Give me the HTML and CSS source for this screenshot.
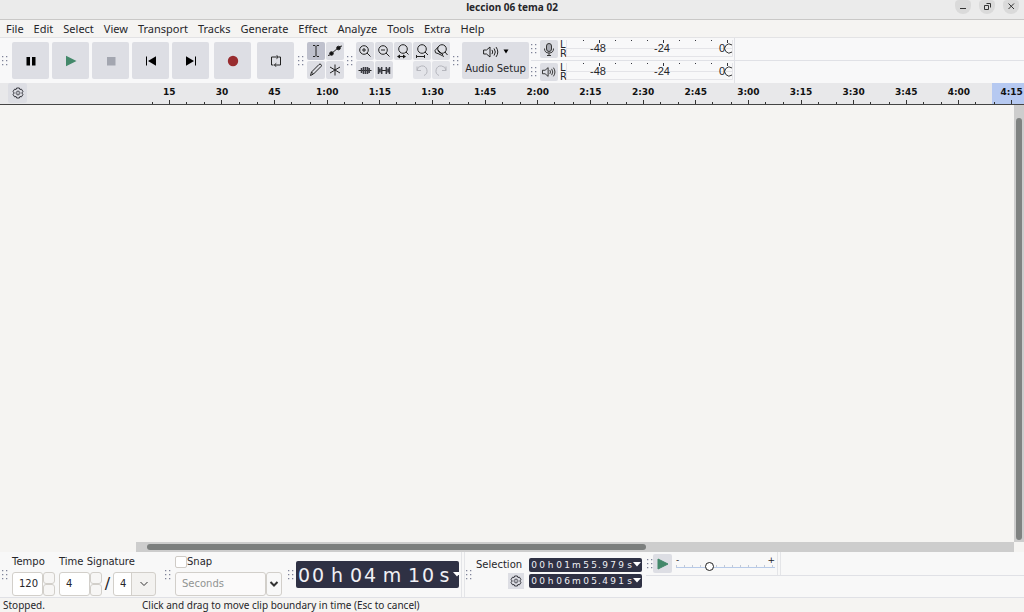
FILE: index.html
```html
<!DOCTYPE html>
<html lang="en">
<head>
<meta charset="utf-8">
<title>leccion 06 tema 02</title>
<link rel="stylesheet" href="styles.css">
</head>
<body>
<svg class="defs" aria-hidden="true">
  <symbol id="grip" viewBox="0 0 6 10"><path fill="#7f8399" d="M0 0h1.300v1.300H0zM4 0h1.300v1.300H4zM0 4h1.300v1.300H0zM4 4h1.300v1.300H4zM0 8h1.300v1.300H0zM4 8h1.300v1.300H4z"/></symbol>
  <symbol id="gear" viewBox="0 0 12 12"><path fill="none" stroke="#33343c" d="M4.600 1h2.800l.5 1.500 1.600-.3 1.400 2.300L9.800 6l1.100 1.500-1.400 2.300-1.600-.3-.5 1.500H4.600l-.5-1.500-1.600.3-1.400-2.300L2.200 6 1.100 4.500l1.400-2.300 1.600.3z"/><path fill="none" stroke="#33343c" stroke-width=".8" d="M5 4.200h2L8.100 6 7 7.800H5L3.900 6z"/><circle cx="6" cy="6" r=".6" fill="#33343c"/></symbol>
  <symbol id="speaker" viewBox="0 0 16 12"><path fill="none" stroke="#222" stroke-linejoin="round" stroke-linecap="round" d="M1 4h2.500L7 1v10L3.500 8H1zM9.200 4.200q1.300 1.800 0 3.600M11.300 2.800q2.300 3.200 0 6.400M13.300 1.400q3.200 4.600 0 9.200"/></symbol>
  <symbol id="meter" viewBox="0 0 168 18">
    <path fill="none" stroke="#e4e4e8" d="M.5 1v16.500h166V1M.5 9.500h166"/>
    <path stroke="#33343c" d="M17.500 1v1M33.500 1v3M49.500 1v1M65.500 1v1M81.500 1v1M97.500 1v3M113.500 1v1M129.500 1v1M145.500 1v1M161.500 1v3"/>
    <path fill="none" stroke="#333" d="M166 6a4.500 4.500 0 1 0 0 7"/>
  </symbol>
</svg>

<header class="titlebar">
  <h1>leccion 06 tema 02</h1>
  <div class="window-buttons">
    <button aria-label="Minimize"><svg viewBox="0 0 16 16"><path d="M5 9.500h6"/></svg></button>
    <button aria-label="Restore"><svg viewBox="0 0 16 16"><path d="M5.500 6.500h4v4h-4zM7.500 4.500h4v4"/></svg></button>
    <button aria-label="Close"><svg viewBox="0 0 16 16"><path d="M5.500 4.500l5.500 5.500M11 4.500l-5.500 5.500"/></svg></button>
  </div>
</header>

<nav class="menubar" aria-label="Main menu">
  <button>File</button><button>Edit</button><button>Select</button><button>View</button><button>Transport</button><button>Tracks</button><button>Generate</button><button>Effect</button><button>Analyze</button><button>Tools</button><button>Extra</button><button>Help</button>
</nav>

<section class="toolbar" aria-label="Toolbars">
  <div class="group">
    <svg class="grip"><use href="#grip"/></svg>
    <div class="transport">
      <button aria-label="Pause"><svg viewBox="0 0 12 12"><path d="M1.500 2h3.500v8.500H1.500zM7 2h3.500v8.500H7z"/></svg></button>
      <button aria-label="Play"><svg viewBox="0 0 12 12"><path fill="#43886a" d="M1 .8 11.500 6 1 11.200z"/></svg></button>
      <button aria-label="Stop"><svg viewBox="0 0 12 12"><path fill="#a3a6b0" d="M2 2h8.500v8.500H2z"/></svg></button>
      <button aria-label="Skip to start"><svg viewBox="0 0 12 12"><path d="M1 1.500h1v9H1zM11 1.200v9.600L3 6z"/></svg></button>
      <button aria-label="Skip to end"><svg viewBox="0 0 12 12"><path d="M10 1.500h1v9h-1zM1 1.200v9.600L9 6z"/></svg></button>
    </div>
    <button class="big" aria-label="Record"><svg viewBox="0 0 12 12"><circle cx="6" cy="6" r="5.200" fill="#982c2f"/></svg></button>
    <button class="big" aria-label="Loop"><svg viewBox="0 0 12 12"><path fill="none" stroke="#222" d="M3.500 10H1.500V2H8M6.500 .3 8.500 2 6.500 3.700M9 2h1.500v8H4.500M6.300 8.300 4.300 10l2 1.700"/></svg></button>
  </div>
  <div class="group">
    <svg class="grip"><use href="#grip"/></svg>
    <div class="tools two">
      <button class="active" aria-label="Selection tool"><svg viewBox="0 0 18 18"><path d="M6 3.500h2l1 1 1-1h2M9 4.500v9M6 14.500h2l1-1 1 1h2"/></svg></button>
      <button aria-label="Envelope tool"><svg viewBox="0 0 18 18"><path d="M2 13.500q2 0 3.500-2L12 6q2-2 4-2"/><circle cx="5.500" cy="11.500" r="1.800" class="solid"/><circle cx="12.500" cy="6" r="1.800" class="solid"/></svg></button>
      <button aria-label="Draw tool"><svg viewBox="0 0 18 18"><path d="M3.500 14.500l1-3.500 7.500-7.500q1-1 2 0t0 2L6.500 13zM4.500 11l2 2"/></svg></button>
      <button aria-label="Multi-tool"><svg viewBox="0 0 18 18"><path d="M9 3.500v11M4 6l10 6M14 6 4 12"/></svg></button>
    </div>
  </div>
  <div class="group">
    <svg class="grip"><use href="#grip"/></svg>
    <div class="tools five">
      <button aria-label="Zoom in"><svg viewBox="0 0 18 18"><circle cx="8" cy="8" r="4.300"/><path d="M11 11l3.500 3.500M6 8h4M8 6v4"/></svg></button>
      <button aria-label="Zoom out"><svg viewBox="0 0 18 18"><circle cx="8" cy="8" r="4.300"/><path d="M11 11l3.500 3.500M6 8h4"/></svg></button>
      <button aria-label="Fit selection"><svg viewBox="0 0 18 18"><circle cx="9" cy="7" r="4.300"/><path d="M12 10l2.500 2.500M4 14.500h7"/><path class="solid thin" d="M6 12.500v4l-3-2zM9 12.500v4l3-2z"/></svg></button>
      <button aria-label="Fit project"><svg viewBox="0 0 18 18"><circle cx="9" cy="7" r="4.300"/><path d="M12 10l3 3M3.500 14.500h8M3.500 13v3M11.500 13v3"/></svg></button>
      <button aria-label="Zoom toggle"><svg viewBox="0 0 18 18"><circle cx="10" cy="7" r="4.300"/><path d="M13 10l2.500 3M6.500 4.500 3 8.500q-.5 3 3 3l6 3M6 8l5 5"/></svg></button>
      <button aria-label="Trim audio"><svg viewBox="0 0 18 18"><path d="M2.500 9.500h13"/><path class="wave" d="M5.500 7v5M7.500 6v7M9.500 6v7M11.500 6v7M13.200 7v5"/></svg></button>
      <button aria-label="Silence audio"><svg viewBox="0 0 18 18"><path d="M6 9.500h6"/><path class="wave" d="M3.500 6v7M5 7.500v4M6.700 6v7M11.300 6v7M13 7.500v4M14.500 6v7"/></svg></button>
      <span></span>
      <button disabled aria-label="Undo"><svg viewBox="0 0 18 18"><path d="M4 5.500v4h4M4 9.500A5 5 0 1 1 11 14.500"/></svg></button>
      <button disabled aria-label="Redo"><svg viewBox="0 0 18 18"><path d="M14 5.500v4h-4M14 9.500A5 5 0 1 0 7 14.500"/></svg></button>
    </div>
  </div>
  <div class="group">
    <svg class="grip"><use href="#grip"/></svg>
    <button class="audio-setup"><span><svg class="speaker"><use href="#speaker"/></svg><svg class="caret" viewBox="0 0 6 5"><path d="M.5.500h5L3 4.500z"/></svg></span>Audio Setup</button>
  </div>
  <div class="meters">
    <div class="meter-row">
      <svg class="grip"><use href="#grip"/></svg>
      <button class="meter-button" aria-label="Record meter"><svg viewBox="0 0 16 16"><rect x="5.500" y="2.500" width="5" height="8" rx="2.500" fill="#a9abb3"/><path d="M3.500 7.500q0 4.500 4.500 4.500t4.500-4.500M8 12v2.500M6 14.500h4"/></svg></button>
      <div class="channels"><span>L</span><span>R</span></div>
      <div class="meter"><svg><use href="#meter"/></svg><span>-48</span><span>-24</span><span>0</span></div>
    </div>
    <div class="meter-row">
      <svg class="grip"><use href="#grip"/></svg>
      <button class="meter-button" aria-label="Playback meter"><svg class="small-speaker"><use href="#speaker"/></svg></button>
      <div class="channels"><span>L</span><span>R</span></div>
      <div class="meter"><svg><use href="#meter"/></svg><span>-48</span><span>-24</span><span>0</span></div>
    </div>
  </div>
</section>

<section class="ruler" aria-label="Timeline">
  <button class="options" aria-label="Timeline options"><svg><use href="#gear"/></svg></button>
  <div class="timeline">
    <ol><li>15</li><li>30</li><li>45</li><li>1:00</li><li>1:15</li><li>1:30</li><li>1:45</li><li>2:00</li><li>2:15</li><li>2:30</li><li>2:45</li><li>3:00</li><li>3:15</li><li>3:30</li><li>3:45</li><li>4:00</li><li>4:15</li></ol>
  </div>
</section>

<main class="tracks">
  <div class="canvas"></div>
  <div class="vscroll"><div></div></div>
  <div class="hscroll"><div></div></div>
</main>

<section class="bottom" aria-label="Bottom toolbars">
  <svg class="grip"><use href="#grip"/></svg>
  <div class="field tempo">
    <label for="tempo">Tempo</label>
    <div class="controls"><input id="tempo" value="120"><div class="spin"><button aria-label="Increase tempo"></button><button aria-label="Decrease tempo"></button></div></div>
  </div>
  <div class="field signature">
    <label for="beats">Time Signature</label>
    <div class="controls"><input id="beats" value="4"><div class="spin"><button aria-label="More beats"></button><button aria-label="Fewer beats"></button></div><span class="slash">/</span>
      <div class="select-wrap"><select aria-label="Beat unit"><option>4</option></select><svg viewBox="0 0 10 6"><path d="M1.500 1 5 4.500 8.500 1"/></svg></div></div>
  </div>
  <svg class="grip"><use href="#grip"/></svg>
  <div class="field snap">
    <label><input type="checkbox">Snap</label>
    <div class="controls combo"><input aria-label="Snap to" value="Seconds" disabled><button aria-label="Open snap list"><svg viewBox="0 0 10 6"><path d="M1.500 1 5 4.500 8.500 1"/></svg></button></div>
  </div>
  <svg class="grip"><use href="#grip"/></svg>
  <div class="time big-time"><b>0</b><b>0</b><i>h</i><b>0</b><b>4</b><i class="m">m</i><b>1</b><b>0</b><i class="s">s</i><svg viewBox="0 0 8 5"><path d="M0 0h8L4 4.500z"/></svg></div>
  <div class="edge"></div>
  <svg class="grip"><use href="#grip"/></svg>
  <div class="selection">
    <span>Selection</span>
    <div class="time"><b>0</b><b>0</b><i>h</i><b>0</b><b>1</b><i class="m">m</i><b>5</b><b>5</b><i class="dot">.</i><b>9</b><b>7</b><b>9</b><i>s</i><svg viewBox="0 0 8 5"><path d="M0 0h8L4 4.500z"/></svg></div>
    <button class="options" aria-label="Selection options"><svg><use href="#gear"/></svg></button>
    <div class="time"><b>0</b><b>0</b><i>h</i><b>0</b><b>6</b><i class="m">m</i><b>0</b><b>5</b><i class="dot">.</i><b>4</b><b>9</b><b>1</b><i>s</i><svg viewBox="0 0 8 5"><path d="M0 0h8L4 4.500z"/></svg></div>
  </div>
  <div class="speed-area">
    <div class="speed">
      <svg class="grip"><use href="#grip"/></svg>
      <button class="play" aria-label="Play at speed"><svg viewBox="0 0 12 12"><path fill="#43886a" stroke="#43886a" d="M1 1 11 6 1 11z"/></svg></button>
      <div class="slider"><div><span>-</span><span>+</span></div><input type="range" min="0" max="100" value="32" aria-label="Playback speed"></div>
      <div class="edge"></div>
    </div>
  </div>
</section>

<footer class="status"><span>Stopped.</span><span>Click and drag to move clip boundary in time (Esc to cancel)</span></footer>
</body>
</html>
```
FILE: styles.css
```css
* { box-sizing: border-box; }
body {
  margin: 0;
  height: 100vh;
  display: flex;
  flex-direction: column;
  overflow: hidden;
  background: #f5f4f2;
  color: #26262a;
  font-family: "DejaVu Sans", sans-serif;
  font-size: 10px;
}
button, input, select { font: inherit; color: inherit; margin: 0; padding: 0; border: 0; }
button { background: none; display: flex; align-items: center; justify-content: center; }
svg { display: block; flex: none; }
.defs { width: 0; height: 0; position: absolute; }
.grip { width: 6px; height: 10px; }

.titlebar {
  display: grid;
  grid-template-columns: 1fr auto 1fr;
  height: 20px;
  background: #ebebeb;
  border-bottom: 1px solid #c9c8c7;
}
.titlebar h1 { grid-column: 2; margin: 0; font: bold 10px/14px "Noto Sans", sans-serif; }
.window-buttons { display: flex; justify-content: flex-end; gap: 8px; padding-right: 5px; height: 14px; }
.window-buttons button { width: 16px; height: 14px; border-radius: 4px 4px 8px 8px; background: #dadada; }
.window-buttons svg { width: 16px; height: 16px; fill: none; stroke: #333; }

.menubar {
  display: flex;
  gap: 10px;
  height: 18px;
  padding-left: 6px;
  border-bottom: 1px solid #e3e3e5;
  font: 11px/18px "Noto Sans", sans-serif;
}

.toolbar { display: flex; height: 45px; background: #f8f8f9; }
.group { display: flex; align-items: center; padding-left: 2px; gap: 4px; }
.group + .group { padding-left: 4px; gap: 3px; }
.transport { display: flex; gap: 3px; margin-right: 1px; }
.transport button, .big { width: 37px; height: 37px; border-radius: 2px; background: #dddee4; }
.group .big + .big { margin-left: 2px; }
.transport svg, .big svg { width: 12px; height: 12px; }
.tools { display: grid; gap: 1px; }
.two { grid-template-columns: repeat(2, 18px); }
.five { grid-template-columns: repeat(5, 18px); }
.group:nth-child(3), .group:nth-child(4) { padding-left: 3px; }
.tools button { width: 18px; height: 18px; border-radius: 2px; background: #dddee4; }
.tools .active { background: #bfc1cd; }
.tools svg { width: 18px; height: 18px; fill: none; stroke: #222; }
.tools .solid { fill: #111; }
.tools .thin { stroke: none; }
.tools .wave { stroke: #3a3b42; stroke-width: 1.5; }
.tools :disabled { background: #e3e4e9; }
.tools :disabled svg { stroke: #b5b6bd; }
.audio-setup {
  flex-direction: column;
  gap: 4px;
  width: 67px;
  height: 37px;
  border-radius: 2px;
  background: #dddee4;
  font-size: 10px;
  line-height: 14px;
  white-space: nowrap;
}
.audio-setup span { display: flex; align-items: center; gap: 4px; }
.speaker { width: 16px; height: 12px; }
.caret { width: 6px; height: 5px; }

.meters { flex: 1; display: grid; grid-template-rows: 23px 22px; margin-left: 2px; }
.meter-row { display: flex; align-items: center; gap: 3px; }
.meter-row:first-child { border-bottom: 1px solid #e0e1e6; }
.meter-button { width: 18px; height: 18px; border-radius: 2px; background: #dddee4; }
.meter-button svg { width: 16px; height: 16px; fill: none; stroke: #333; }
.meter-button .small-speaker { width: 14px; height: 12px; }
.channels { display: grid; width: 6px; font-size: 10px; line-height: 9px; margin-left: -1px; }
.meter {
  display: grid;
  grid-template-columns: 64px 64px 56px;
  align-items: center;
  width: 169px;
  height: 22px;
  margin-left: -3px;
  padding-bottom: 2px;
  overflow: hidden;
  border-right: 1px solid #e0e1e6;
  font-family: "Liberation Sans", sans-serif;
  font-size: 11px;
  line-height: 16px;
  text-align: center;
  position: relative;
}
.meter span { position: relative; }
.meter svg { position: absolute; inset: 1px auto auto 0; width: 168px; height: 18px; }

.ruler { display: flex; height: 22px; background: #e8e8ea; border-bottom: 1px solid #444; }
.options { background: #dddee4; }
.options svg { width: 12px; height: 12px; }
.ruler .options { width: 19px; height: 20px; margin-left: 8px; border-radius: 2px; }
.timeline {
  flex: 1;
  margin-left: 116px;
  overflow: hidden;
  background: linear-gradient(#b6c9f1, #b6c9f1) right / 32px 100% no-repeat;
}
.timeline ol { display: flex; width: calc(100% + 14px); height: 21px; margin: 0; padding: 0; list-style: none; }
.timeline li {
  flex: 1 1 0;
  text-align: center;
  font-weight: bold;
  font-size: 9px;
  line-height: 18px;
  color: #111;
  background:
    linear-gradient(#333, #333) 50% 100% / 1px 4px no-repeat,
    linear-gradient(#333, #333) 17% 100% / 1px 2px no-repeat,
    linear-gradient(#333, #333) 83% 100% / 1px 2px no-repeat;
}

.tracks {
  flex: 1;
  display: grid;
  grid-template-columns: 136px minmax(0, 1fr) 10px;
  grid-template-rows: minmax(0, 1fr) 10px;
}
.canvas { grid-column: 1 / 3; }
.vscroll { padding: 13px 2px 2px; background: #cdcdcd; }
.hscroll { grid-column: 2; padding: 2px 0 2px 11px; background: #cdcdcd; }
.vscroll div { height: 100%; border-radius: 3px; background: #7f8281; }
.hscroll div { width: 58%; max-width: 499px; height: 100%; border-radius: 3px; background: #7c7f7e; }

.bottom {
  display: flex;
  align-items: center;
  height: 46px;
  padding-left: 2px;
  background: #f8f8f8;
  border-bottom: 1px solid #e0e1e6;
}
.field { display: flex; flex-direction: column; gap: 4px; height: 40px; white-space: nowrap; margin-top: 2px; }
.field label { display: flex; align-items: center; height: 12px; line-height: 12px; }
.controls { display: flex; align-items: center; height: 24px; }
.tempo { width: 43px; margin-left: 4px; }
.signature { margin-left: 4px; margin-right: 9px; }
.tempo .controls input, .signature .controls input {
  width: 31px;
  height: 24px;
  padding-left: 6px;
  border: 1px solid #d2cfca;
  border-radius: 3px;
  background: #fff;
}
.spin { display: grid; }
.spin button { width: 12px; height: 12px; border: 1px solid #d2cfca; border-radius: 3px; background: #f7f6f5; }
.slash { width: 11px; text-align: center; font-size: 16px; }
.select-wrap {
  display: flex;
  align-items: center;
  width: 43px;
  height: 24px;
  border: 1px solid #d2cfca;
  border-radius: 3px;
  background: linear-gradient(90deg, #fff 17px, #d2cfca 17px, #d2cfca 18px, #f3f2f0 18px);
}
.select-wrap select { width: 25px; height: 22px; padding-left: 6px; appearance: none; background: transparent; }
.field .controls svg { width: 10px; height: 6px; fill: none; stroke: #333; }
.snap { width: 107px; margin-left: 4px; margin-right: 6px; }
.snap label input { appearance: none; width: 12px; height: 12px; border: 1px solid #cfcbc6; border-radius: 2px; background: #fff; }
.combo input { width: 91px; height: 24px; padding-left: 6px; border: 1px solid #d2cfca; border-radius: 3px; background: #fbfafa; color: #919492; }
.combo button { width: 16px; height: 24px; border: 1px solid #d2cfca; border-radius: 3px; }
.field .combo svg { stroke-width: 2; }

.time {
  display: flex;
  align-items: center;
  width: 113px;
  height: 14px;
  padding-left: 1px;
  border-radius: 2px;
  background: #2f3144;
  color: #f0f0f4;
  font-size: 9px;
  line-height: 14px;
  text-align: center;
  overflow: hidden;
}
.time b { flex: none; width: 8px; font-weight: normal; }
.time i { flex: none; width: 9px; font-style: normal; }
.time .m { width: 11px; }
.time .dot { width: 3px; }
.time svg { width: 8px; height: 5px; fill: #fff; margin-left: -1px; }
.big-time { width: 163px; height: 27px; margin-left: 2px; font-size: 19px; }
.big-time b { width: 14px; }
.big-time i { width: 24px; }
.big-time .m { width: 30px; }
.big-time .s { width: 19px; }
.edge { align-self: stretch; width: 4px; margin-left: 2px; border: solid #e4e5e8; border-width: 0 1px; }
.edge + .grip { margin-left: 1px; }
.selection {
  display: grid;
  grid-template-columns: 48px 113px;
  grid-template-rows: 14px 14px;
  gap: 2px 5px;
  align-items: center;
  margin: 0 0 4px 4px;
}
.selection > span { white-space: nowrap; }
.selection .options { width: 16px; height: 16px; justify-self: end; }
.speed-area { flex: 1; align-self: stretch; margin-left: 4px; }
.speed { display: flex; align-items: center; height: 24px; padding-left: 1px; border-bottom: 1px solid #e0e1e6; }
.play { width: 19px; height: 19px; border-radius: 2px; background: #dddee4; }
.play svg { width: 12px; height: 12px; }
.slider { display: grid; grid-template-rows: 6px 12px; width: 99px; margin-left: 4px; }
.slider div { display: flex; justify-content: space-between; font-size: 9px; line-height: 10px; }
.slider input {
  appearance: none;
  width: 100%;
  height: 12px;
  background:
    linear-gradient(#b7cae8, #b7cae8) 0 6px / 100% 1px no-repeat,
    repeating-linear-gradient(90deg, #c3c9d5 0 1px, transparent 1px 8px) 0 4px / 100% 2px no-repeat;
}
.slider input::-webkit-slider-thumb { appearance: none; width: 9px; height: 9px; border: 1px solid #222; border-radius: 50%; background: #fff; }

.status { display: grid; grid-template-columns: 139px 1fr; height: 14px; padding-left: 3px; font: 10px/14px "Noto Sans", sans-serif; }
.status span { height: 14px; padding-top: 1px; line-height: 13px; }
```
